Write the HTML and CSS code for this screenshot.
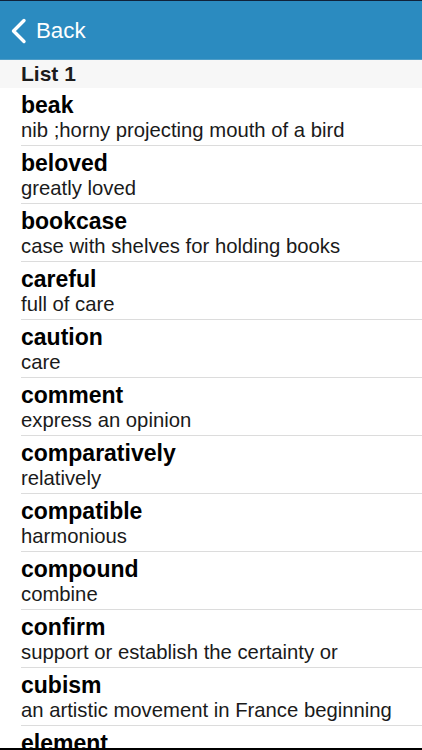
FILE: index.html
```html
<!DOCTYPE html>
<html lang="en">
<head>
<meta charset="utf-8">
<title>List 1</title>
<link rel="stylesheet" href="styles.css">
</head>
<body>
<div class="screen">
  <header class="navbar">
    <a class="back" href="#">
      <svg class="chev" width="18" height="26" viewBox="0 0 18 26"><polyline points="14,2.5 3.5,13 14,23.5" fill="none" stroke="#fff" stroke-width="3.4" stroke-linecap="round" stroke-linejoin="round"/></svg>
      <span>Back</span>
    </a>
  </header>
  <div class="section">List 1</div>
  <ul class="list">
    <li class="row"><div class="word">beak</div><div class="def">nib ;horny projecting mouth of a bird</div></li>
    <li class="row"><div class="word">beloved</div><div class="def">greatly loved</div></li>
    <li class="row"><div class="word">bookcase</div><div class="def">case with shelves for holding books</div></li>
    <li class="row"><div class="word">careful</div><div class="def">full of care</div></li>
    <li class="row"><div class="word">caution</div><div class="def">care</div></li>
    <li class="row"><div class="word">comment</div><div class="def">express an opinion</div></li>
    <li class="row"><div class="word">comparatively</div><div class="def">relatively</div></li>
    <li class="row"><div class="word">compatible</div><div class="def">harmonious</div></li>
    <li class="row"><div class="word">compound</div><div class="def">combine</div></li>
    <li class="row"><div class="word">confirm</div><div class="def">support or establish the certainty or</div></li>
    <li class="row"><div class="word">cubism</div><div class="def">an artistic movement in France beginning</div></li>
    <li class="row"><div class="word">element</div><div class="def">a basic part</div></li>
  </ul>
  <div class="bottom-bar"></div>
</div>
</body>
</html>
```
FILE: styles.css
```css
* { box-sizing: border-box; }
html, body { margin: 0; padding: 0; }
body {
  background: #fff;
  font-family: "Liberation Sans", Arial, Helvetica, sans-serif;
  color: #000;
}
.screen {
  width: 422px;
  height: 750px;
  display: flex;
  flex-direction: column;
  overflow: hidden;
}
.navbar {
  flex: 0 0 60px;
  background: #2b8bc0;
  border-top: 1px solid #10223a;
  border-bottom: 1px solid #4f9dc7;
  display: flex;
  align-items: center;
}
.back {
  display: flex;
  align-items: center;
  color: #fff;
  text-decoration: none;
  font-size: 22.3px;
  padding-left: 10px;
  gap: 8px;
  margin-top: 2px;
}
.back span { line-height: 26px; margin-top: -1px; }
.chev { display: block; }
.section {
  flex: 0 0 28px;
  background: #f7f7f7;
  font-weight: bold;
  font-size: 21px;
  line-height: 28px;
  padding-left: 21px;
  color: #1c1c1c;
}
.list {
  flex: 1 1 auto;
  list-style: none;
  margin: 0;
  padding: 0;
  overflow: hidden;
}
.row {
  height: 58px;
  padding: 3px 0 0 21px;
}
.row .word {
  font-weight: bold;
  font-size: 23px;
  line-height: 28px;
  color: #000;
}
.row .def {
  font-size: 20.3px;
  line-height: 22px;
  color: #1a1a1a;
  padding-bottom: 4px;
  border-bottom: 1px solid #dcdcdc;
  white-space: nowrap;
}
.bottom-bar {
  flex: 0 0 2px;
  background: #000;
}
```
